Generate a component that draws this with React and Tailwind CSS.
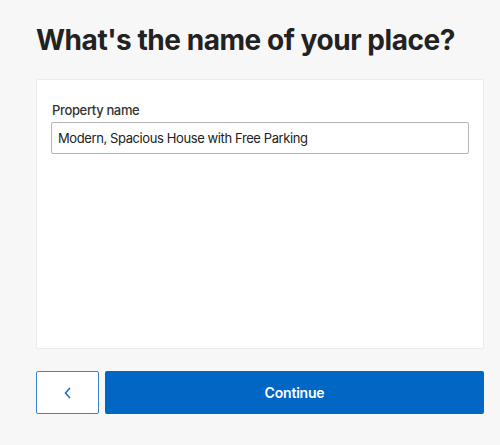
export default function App() {
  return (
    <div className="min-h-[445px] w-[500px] bg-[#f7f7f7] font-['Inter',sans-serif] text-[#222]">
      <div className="ml-9 w-[448px] pt-[22px]">
        <h1 className="text-[28px] font-bold leading-[36px] tracking-[-0.45px] text-[#222]">
          What's the name of your place?
        </h1>
        <div className="mt-[21px] h-[270px] rounded-[2px] border border-[#ececec] bg-white px-[14px] pt-[22px]">
          <label className="block pl-px text-[13px] font-medium leading-[16px] tracking-[-0.35px] text-[#333]">Property name</label>
          <input
            readOnly
            value="Modern, Spacious House with Free Parking"
            className="mt-[4px] h-[32px] w-full rounded-[2px] border border-[#b5b5b5] bg-white px-[6px] text-[13px] tracking-[-0.4px] text-[#222] outline-none"
          />
        </div>
        <div className="mt-[22px] flex gap-[6px]">
          <button className="flex h-[43px] w-[63px] items-center justify-center rounded-[2px] border border-[#3b84cc] bg-white text-[#1a6fc4]">
            <svg width="10" height="14" viewBox="0 0 10 14" fill="none" stroke="currentColor" strokeWidth="1.6">
              <path d="M7 2 L2.5 7 L7 12" />
            </svg>
          </button>
          <button className="flex h-[43px] flex-1 items-center justify-center rounded-[2px] bg-[#0067c5] text-[14px] font-semibold tracking-[-0.2px] text-white">
            Continue
          </button>
        </div>
      </div>
    </div>
  );
}
